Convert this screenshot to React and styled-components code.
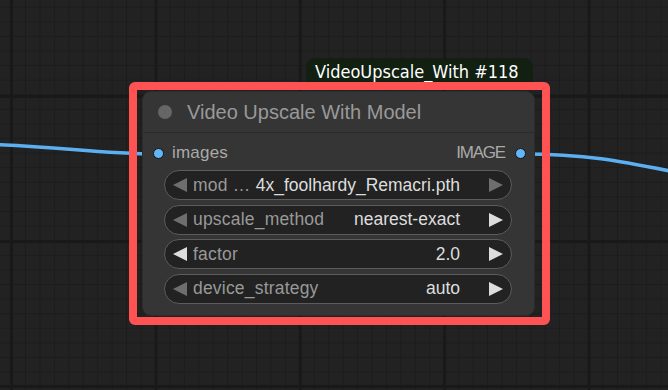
import React from 'react';
import styled, { createGlobalStyle } from 'styled-components';

const GlobalStyle = createGlobalStyle`
  html, body {
    margin: 0;
    padding: 0;
    background: #222222;
  }
  body {
    font-family: "Liberation Sans", Arial, sans-serif;
  }
`;

const Canvas = styled.div`
  position: relative;
  width: 668px;
  height: 390px;
  overflow: hidden;
  display: flex;
  align-items: flex-start;
  background-color: #222222;
  background-image:
    linear-gradient(to right, #191919 3px, transparent 3px),
    linear-gradient(to bottom, #191919 3px, transparent 3px),
    linear-gradient(to right, #1c1c1c 1px, transparent 1px),
    linear-gradient(to bottom, #1c1c1c 1px, transparent 1px);
  background-size: 144.4px 100%, 100% 145px, 14.44px 14.6px, 14.44px 14.6px;
  background-position: 10px 0, 0 95px, 10.6px 6.7px, 10.6px 6.7px;
`;

const LinkLayer = styled.svg`
  position: absolute;
  inset: 0;
  pointer-events: none;
`;

const NodeWrap = styled.div`
  position: relative;
  margin: 82px 0 0 129px;
`;

const TitleTag = styled.div`
  position: absolute;
  left: 177px;
  top: -24px;
  width: 227px;
  height: 32px;
  box-sizing: border-box;
  padding-left: 9px;
  border-radius: 9px 9px 0 0;
  background: #112011;
  color: #ffffff;
  font-family: "DejaVu Sans Condensed", "DejaVu Sans", sans-serif;
  font-stretch: condensed;
  font-size: 18px;
  line-height: 28px;
  white-space: nowrap;
`;

const Frame = styled.div`
  position: relative;
  border: 8px solid #ff5353;
  border-radius: 6px;
  padding: 2px 8px 2px 6px;
`;

const Node = styled.div`
  width: 391px;
  height: 223px;
  box-sizing: border-box;
  background: #353535;
  border-radius: 8px;
  box-shadow: 0 0 0 1px #2c2c2c;
  display: flex;
  flex-direction: column;
`;

const TitleBar = styled.div`
  height: 41px;
  box-sizing: border-box;
  border-bottom: 1px solid #2b2b2b;
  display: flex;
  align-items: center;
  gap: 15px;
  padding-left: 15px;
  color: #999999;
  font-size: 20px;
`;

const StatusDot = styled.span`
  width: 14px;
  height: 14px;
  border-radius: 50%;
  background: #666666;
`;

const Body = styled.div`
  padding: 9px 0 11px;
  display: flex;
  flex-direction: column;
`;

const SlotRow = styled.div`
  height: 22px;
  display: flex;
  align-items: center;
  padding: 0 8px 0 10px;
  color: #aaaaaa;
  font-size: 17px;
  margin-bottom: 6px;
`;

const Slot = styled.div`
  display: flex;
  align-items: center;
  gap: ${(p) => (p.$out ? '10px' : '8px')};
  margin-left: ${(p) => (p.$out ? 'auto' : '0')};
  letter-spacing: ${(p) => (p.$out ? '-1.2px' : '0.2px')};
`;

const SlotDot = styled.span`
  width: 11px;
  height: 11px;
  box-sizing: border-box;
  border-radius: 50%;
  background: #62b5f7;
  border: 1px solid #151515;
`;

const Widgets = styled.div`
  display: flex;
  flex-direction: column;
  gap: 4.67px;
  margin: 0 22px 0 21px;
`;

const Pill = styled.div`
  height: 30px;
  box-sizing: border-box;
  border: 1px solid #5c5c5c;
  border-radius: 15px;
  background: #222222;
  display: flex;
  align-items: center;
  padding: 0 8px;
  font-size: 17.5px;
  white-space: nowrap;
`;

const Label = styled.span`
  margin-left: 6px;
  color: #999999;
  letter-spacing: 0.2px;
`;

const Value = styled.span`
  margin-left: auto;
  margin-right: 29px;
  color: #dddddd;
`;

const Arrow = ({ dir, bright }) => (
  <svg width="14" height="14" viewBox="0 0 14 14">
    <polygon
      points={dir === 'left' ? '14,0 14,14 0,7' : '0,0 0,14 14,7'}
      fill={bright ? '#dddddd' : '#6e6e6e'}
    />
  </svg>
);

const widgets = [
  { label: 'mod …', value: '4x_foolhardy_Remacri.pth', left: false, right: false },
  { label: 'upscale_method', value: 'nearest-exact', left: false, right: true },
  { label: 'factor', value: '2.0', left: true, right: true },
  { label: 'device_strategy', value: 'auto', left: false, right: true },
];

const App = () => {
  return (
    <>
      <GlobalStyle />
      <Canvas>
        <LinkLayer width="668" height="390">
          <path
            d="M -20 144 C 60 146, 95 154, 158 154"
            fill="none"
            stroke="#5cb0f2"
            strokeWidth="3.5"
          />
          <path
            d="M 521 154 C 590 154, 620 161, 700 177"
            fill="none"
            stroke="#5cb0f2"
            strokeWidth="3.5"
          />
        </LinkLayer>
        <NodeWrap>
          <TitleTag>VideoUpscale_With #118</TitleTag>
          <Frame>
            <Node>
              <TitleBar>
                <StatusDot />
                Video Upscale With Model
              </TitleBar>
              <Body>
                <SlotRow>
                  <Slot>
                    <SlotDot />
                    images
                  </Slot>
                  <Slot $out>
                    IMAGE
                    <SlotDot />
                  </Slot>
                </SlotRow>
                <Widgets>
                  {widgets.map((w) => (
                    <Pill key={w.label}>
                      <Arrow dir="left" bright={w.left} />
                      <Label>{w.label}</Label>
                      <Value>{w.value}</Value>
                      <Arrow dir="right" bright={w.right} />
                    </Pill>
                  ))}
                </Widgets>
              </Body>
            </Node>
          </Frame>
        </NodeWrap>
      </Canvas>
    </>
  );
};

export default App;
